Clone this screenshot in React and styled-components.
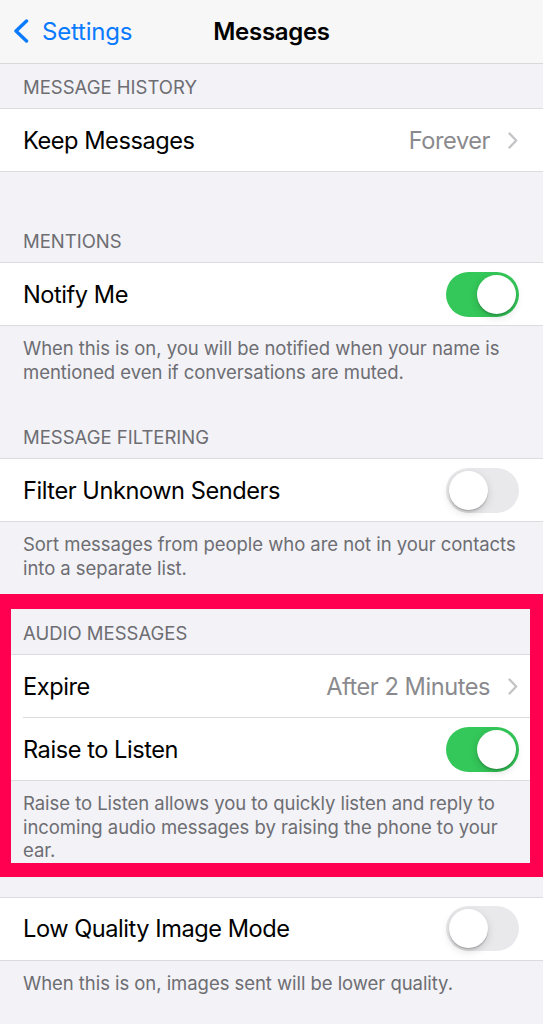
import React from "react";
import styled, { createGlobalStyle } from "styled-components";

const Global = createGlobalStyle`
  html, body { margin: 0; padding: 0; background: #f2f2f7; }
  * { box-sizing: border-box; }
  body { font-family: Inter, "Liberation Sans", Arial, sans-serif; -webkit-font-smoothing: antialiased; }
`;

const Page = styled.div`
  width: 543px;
  min-height: 1024px;
  background: #f2f2f7;
  overflow: hidden;
`;

const NavBar = styled.header`
  height: 64px;
  display: grid;
  grid-template-columns: 1fr auto 1fr;
  align-items: center;
  background: #f7f7f7;
  border-bottom: 1px solid #d9d9dc;
  padding-bottom: 1px;
`;

const Back = styled.div`
  display: flex;
  align-items: center;
  gap: 13px;
  padding-left: 13px;
  color: #0a7aff;
  font-size: 24px;
  letter-spacing: -0.2px;
`;

const Title = styled.div`
  font-size: 24px;
  font-weight: 600;
  color: #000;
  letter-spacing: -0.3px;
`;

const Section = styled.section`
  position: relative;
  margin-top: ${(p) => p.$gap || 0}px;
`;

const Header = styled.div`
  padding: ${(p) => p.$top}px 23px 9px;
  font-size: 18.5px;
  line-height: 23px;
  color: #6d6d72;
  text-transform: uppercase;
`;

const Group = styled.div`
  background: #fff;
  border-top: 1px solid #dcdce0;
  border-bottom: 1px solid #dcdce0;
`;

const Row = styled.div`
  height: ${(p) => (p.$last ? 62 : 63)}px;
  margin-left: 23px;
  padding-right: 24px;
  display: flex;
  align-items: center;
  justify-content: space-between;
  border-bottom: ${(p) => (p.$last ? "none" : "1px solid #dcdce0")};
`;

const Label = styled.span`
  font-size: 23.6px;
  color: #000;
  letter-spacing: -0.45px;
`;

const Value = styled.span`
  display: flex;
  align-items: center;
  gap: 18px;
  padding-right: 1px;
  font-size: 23.6px;
  color: #8a8a8e;
  letter-spacing: -0.45px;
`;

const Footer = styled.div`
  padding: 11px 23px 0;
  font-size: 18.5px;
  line-height: 23.5px;
  color: #6d6d72;
  letter-spacing: -0.05px;
`;

const Track = styled.div`
  width: 73px;
  height: 45px;
  border-radius: 23px;
  background: ${(p) => (p.$on ? "#34c759" : "#e9e9eb")};
  padding: 3px;
  display: flex;
  justify-content: ${(p) => (p.$on ? "flex-end" : "flex-start")};
  flex-shrink: 0;
`;

const Knob = styled.div`
  width: 39px;
  height: 39px;
  border-radius: 50%;
  background: #fff;
  box-shadow: 0 3px 8px rgba(0, 0, 0, 0.15), 0 1px 1px rgba(0, 0, 0, 0.16), 0 3px 1px rgba(0, 0, 0, 0.06);
`;

const Highlight = styled.div`
  position: absolute;
  top: 14px;
  bottom: -14px;
  left: 0;
  right: 0;
  border-style: solid;
  border-color: #ff0050;
  border-width: 15px 13px 14px 11px;
  pointer-events: none;
`;

const Toggle = ({ on }) => (
  <Track $on={on}>
    <Knob />
  </Track>
);

const Chevron = () => (
  <svg width="10" height="17" viewBox="0 0 10 17" fill="none">
    <path d="M1.5 1.5 L8.2 8.5 L1.5 15.5" stroke="#c4c4c7" strokeWidth="2.4" strokeLinecap="round" strokeLinejoin="round" />
  </svg>
);

const BackChevron = () => (
  <svg width="16" height="24" viewBox="0 0 16 24" fill="none">
    <path d="M13.5 2 L3 12 L13.5 22" stroke="#0a7aff" strokeWidth="3.4" strokeLinecap="round" strokeLinejoin="round" />
  </svg>
);

export default function App() {
  return (
    <Page>
      <Global />
      <NavBar>
        <Back>
          <BackChevron />
          <span>Settings</span>
        </Back>
        <Title>Messages</Title>
        <div />
      </NavBar>

      <Section>
        <Header $top={12}>Message History</Header>
        <Group>
          <Row $last>
            <Label>Keep Messages</Label>
            <Value>
              Forever
              <Chevron />
            </Value>
          </Row>
        </Group>
      </Section>

      <Section>
        <Header $top={58}>Mentions</Header>
        <Group>
          <Row $last>
            <Label>Notify Me</Label>
            <Toggle on />
          </Row>
        </Group>
        <Footer>
          When this is on, you will be notified when your name is mentioned even if conversations are muted.
        </Footer>
      </Section>

      <Section>
        <Header $top={42}>Message Filtering</Header>
        <Group>
          <Row $last>
            <Label>Filter Unknown Senders</Label>
            <Toggle />
          </Row>
        </Group>
        <Footer>
          Sort messages from people who are not in your contacts into a separate list.
        </Footer>
      </Section>

      <Section>
        <Header $top={42}>Audio Messages</Header>
        <Group>
          <Row>
            <Label>Expire</Label>
            <Value>
              After 2 Minutes
              <Chevron />
            </Value>
          </Row>
          <Row $last>
            <Label>Raise to Listen</Label>
            <Toggle on />
          </Row>
        </Group>
        <Footer>
          Raise to Listen allows you to quickly listen and reply to incoming audio messages by raising the phone to your ear.
        </Footer>
        <Highlight />
      </Section>

      <Section $gap={34}>
        <Group>
          <Row $last>
            <Label>Low Quality Image Mode</Label>
            <Toggle />
          </Row>
        </Group>
        <Footer>When this is on, images sent will be lower quality.</Footer>
      </Section>
    </Page>
  );
}
